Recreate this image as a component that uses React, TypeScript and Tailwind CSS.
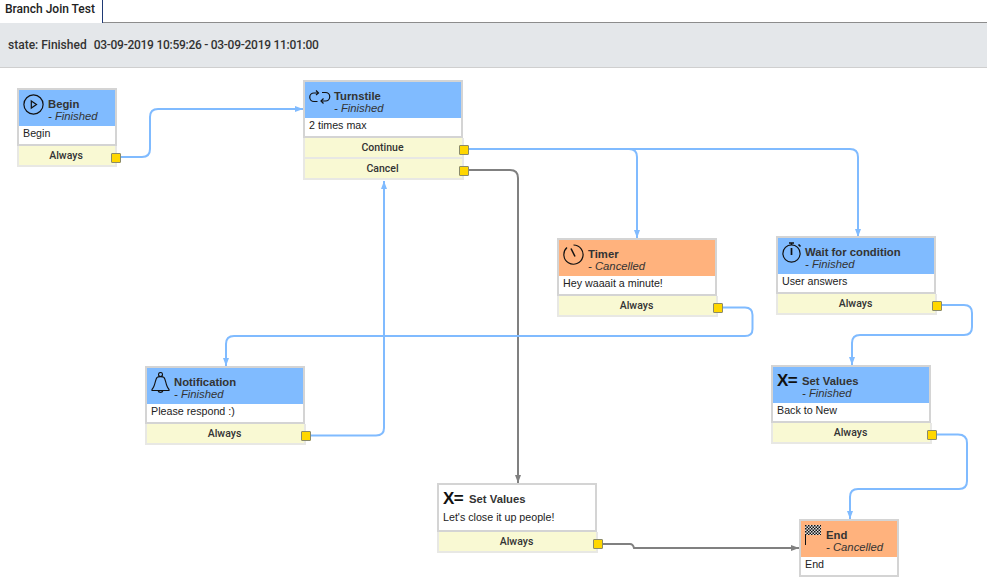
import type { ReactNode } from "react";

const blue = "#80bbff";
const gray = "#808080";

type NodeProps = {
  x: number;
  y: number;
  w: number;
  iconW: number;
  tone: "blue" | "orange" | "white";
  icon: ReactNode;
  title: string;
  state?: string;
  text: string;
  exits?: string[];
};

const PlayIcon = () => (
  <svg width="22" height="22" viewBox="0 0 22 22" fill="none" stroke="#111" strokeWidth="1.2">
    <circle cx="10.500" cy="10.500" r="9.600" />
    <path d="M8.300 7 L13.500 10.500 L8.300 14 Z" />
  </svg>
);

const LoopIcon = () => (
  <svg width="22" height="22" viewBox="0 0 22 22" fill="none" stroke="#111" strokeWidth="1.2">
    <path d="M8.500 15.500 H5 A4 4 0 0 1 5 7 H9" />
    <path d="M7 4.500 L9.500 7 L7 9" />
    <path d="M13 6.500 H16.500 A4 4 0 0 1 16.500 15 H12.500" />
    <path d="M14.500 12.500 L12 15 L14.500 17.500" />
  </svg>
);

const TimerIcon = () => (
  <svg width="22" height="22" viewBox="0 0 22 22" fill="none" stroke="#111" strokeWidth="1.2">
    <path d="M10.500 1 A9.600 9.600 0 1 1 4 3.500" />
    <path d="M8 4.500 L12 12.500" strokeWidth="1.5" />
  </svg>
);

const WatchIcon = () => (
  <svg width="22" height="24" viewBox="0 0 22 24" fill="none" stroke="#111" strokeWidth="1.2">
    <circle cx="9.500" cy="11.500" r="8.600" />
    <path d="M7 1 H12 M9.500 1 V3" strokeWidth="1.4" />
    <path d="M9.500 6 V13" strokeWidth="1.7" />
    <path d="M16.500 2.500 L18.500 4.500" strokeWidth="1.7" />
  </svg>
);

const BellIcon = () => (
  <svg width="20" height="22" viewBox="0 0 20 22" fill="none" stroke="#111" strokeWidth="1.1">
    <circle cx="9.500" cy="2.500" r="2" />
    <path d="M6 5.500 C7 4.300 12 4.300 13 5.500 C15 7.500 14.500 14 18 17.500 V18.500 H1 V17.500 C4.500 14 4 7.500 6 5.500 Z" />
    <path d="M7 18.500 A2.600 2.600 0 0 0 12 18.500" />
  </svg>
);

const FlagIcon = () => (
  <svg width="18" height="21" viewBox="0 0 18 21" fill="none">
    <defs>
      <pattern id="checks" width="3" height="3" patternUnits="userSpaceOnUse">
        <rect width="3" height="3" fill="#ddd" />
        <rect width="1.500" height="1.500" fill="#111" />
        <rect x="1.500" y="1.500" width="1.500" height="1.500" fill="#111" />
      </pattern>
    </defs>
    <path d="M0.500 0 V20" stroke="#111" strokeWidth="1" />
    <rect x="0" y="0" width="16" height="10" fill="url(#checks)" />
  </svg>
);

const XEqIcon = () => (
  <span className="block pt-[1px] font-['Liberation_Sans',sans-serif] text-[17px] leading-none font-bold tracking-[-0.5px] text-[#111]">
    X=
  </span>
);

function FlowNode({ x, y, w, iconW, tone, icon, title, state, text, exits }: NodeProps) {
  const headerBg = tone === "blue" ? "bg-[#80bbff]" : tone === "orange" ? "bg-[#ffb27d]" : "bg-white";
  const small = w < 160;

  return (
    <div className="absolute" style={{ left: x, top: y, width: w }}>
      <div className="border-2 border-[#d4d4d4] bg-white">
        <div className={`${headerBg} ${state ? "h-[36px]" : "h-[25px]"} flex items-start pt-[4px]`}>
          <div className="shrink-0 pl-[4px]" style={{ width: iconW }}>
            {icon}
          </div>
          <div className="pt-[4px] font-['Liberation_Sans',sans-serif] text-[11.3px] leading-[12px] text-[#333]">
            <div className="font-bold">{title}</div>
            {state ? <div className="italic">- {state}</div> : null}
          </div>
        </div>
        <div className={`${state ? "h-[18px]" : "h-[20px]"} pl-[4px] font-['Liberation_Sans',sans-serif] text-[10.7px] leading-[14px] text-[#222]`}>
          {text}
        </div>
      </div>
      {exits?.map((exit) => (
        <div
          key={exit}
          className={`${small ? "" : "-mr-[1px]"} relative flex h-[21px] items-center justify-center border-x-2 border-b-2 border-[#e8e8e4] bg-[#f9f9d3] pr-[2px] font-['Roboto',sans-serif] text-[10.5px] font-medium text-[#333]`}
        >
          {exit}
          <span className={`${small ? "-right-[6px]" : "-right-[7px]"} absolute top-[7px] h-[10px] w-[10px] rounded-[1px] border border-[#8a8a6a] bg-[#ffd700]`} />
        </div>
      ))}
    </div>
  );
}

function Edge({ d, color }: { d: string; color: string }) {
  return <path d={d} fill="none" stroke={color} strokeWidth="2" />;
}

function Arrow({ d, color }: { d: string; color: string }) {
  return <polygon points={d} fill={color} />;
}

export default function App() {
  return (
    <div className="flex h-[585px] w-[987px] flex-col overflow-hidden bg-white font-['Roboto',sans-serif] text-[#333]">
      <div className="flex h-[23px] shrink-0">
        <div className="w-[103px] border-r border-[#1f3a75] pl-[5px] text-[12px] leading-[19px] font-medium text-[#222]">
          Branch Join Test
        </div>
        <div className="flex-1 border-b border-[#8c8c8c]" />
      </div>
      <div className="flex h-[45px] shrink-0 items-center border-b border-[#cfcfcf] bg-[#e4e7ea] pl-[8px] text-[12px] font-medium text-[#333]">
        <span>state: Finished</span>
        <span className="ml-[7px] tracking-[-0.27px]">03-09-2019 10:59:26 - 03-09-2019 11:01:00</span>
      </div>
      <div className="relative flex-1">
        <svg className="absolute left-0 top-[-68px]" width="987" height="585">
          <Edge color={blue} d="M116 157 H142 Q150 157 150 149 V117 Q150 109 158 109 H303" />
          <Arrow color={blue} d="295,106 303,109 295,112" />
          <Edge color={blue} d="M463 149 H629 Q637 149 637 157 V238" />
          <Arrow color={blue} d="634,230 637,238 640,230" />
          <Edge color={blue} d="M463 149 H850 Q858 149 858 157 V237" />
          <Arrow color={blue} d="855,229 858,237 861,229" />
          <Edge color={gray} d="M463 170 H510 Q518 170 518 178 V483" />
          <Arrow color={gray} d="515,475 518,483 521,475" />
          <Edge color={blue} d="M717 307.500 H745 Q752.500 307.500 752.500 315 V329 Q752.500 336 745 336 H234 Q226 336 226 344 V366" />
          <Arrow color={blue} d="223,358 226,366 229,358" />
          <Edge color={blue} d="M306 435.500 H376 Q384 435.500 384 428 V181" />
          <Arrow color={blue} d="381,189 384,181 387,189" />
          <Edge color={blue} d="M937 305 H964 Q972 305 972 313 V327 Q972 335 964 335 H860 Q852 335 852 343 V365" />
          <Arrow color={blue} d="849,357 852,365 855,357" />
          <Edge color={blue} d="M931 434.500 H958 Q967 434.500 967 443 V481 Q967 489 959 489 H858 Q850 489 850 497 V519" />
          <Arrow color={blue} d="847,511 850,519 853,511" />
          <Edge color={gray} d="M597 544 H630 Q633 544 634 548 H799" />
          <Arrow color={gray} d="791,545 799,548 791,551" />
        </svg>
        <div className="absolute left-0 top-[-68px] h-[585px] w-[987px]">
          <FlowNode x={17} y={88} w={100} iconW={29} tone="blue" icon={<PlayIcon />} title="Begin" state="Finished" text="Begin" exits={["Always"]} />
          <FlowNode x={303} y={80} w={160} iconW={29} tone="blue" icon={<LoopIcon />} title="Turnstile" state="Finished" text="2 times max" exits={["Continue", "Cancel"]} />
          <FlowNode x={557} y={238} w={160} iconW={29} tone="orange" icon={<TimerIcon />} title="Timer" state="Cancelled" text="Hey waaait a minute!" exits={["Always"]} />
          <FlowNode x={776} y={236} w={160} iconW={27} tone="blue" icon={<WatchIcon />} title="Wait for condition" state="Finished" text="User answers" exits={["Always"]} />
          <FlowNode x={145} y={366} w={160} iconW={27} tone="blue" icon={<BellIcon />} title="Notification" state="Finished" text="Please respond :)" exits={["Always"]} />
          <FlowNode x={771} y={365} w={160} iconW={29} tone="blue" icon={<XEqIcon />} title="Set Values" state="Finished" text="Back to New" exits={["Always"]} />
          <FlowNode x={437} y={483} w={160} iconW={30} tone="white" icon={<XEqIcon />} title="Set Values" text="Let's close it up people!" exits={["Always"]} />
          <FlowNode x={799} y={519} w={100} iconW={25} tone="orange" icon={<FlagIcon />} title="End" state="Cancelled" text="End" />
        </div>
      </div>
    </div>
  );
}
